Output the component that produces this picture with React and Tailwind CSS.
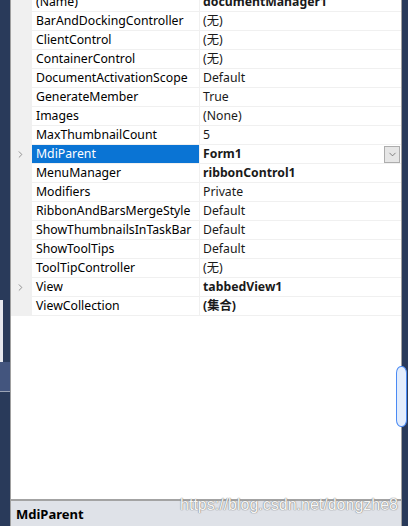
import { ChevronRight, ChevronDown } from "lucide-react";

const rows = [
  { name: "(Name)", value: "documentManager1", bold: true },
  { name: "BarAndDockingController", value: "(无)" },
  { name: "ClientControl", value: "(无)" },
  { name: "ContainerControl", value: "(无)" },
  { name: "DocumentActivationScope", value: "Default" },
  { name: "GenerateMember", value: "True" },
  { name: "Images", value: "(None)" },
  { name: "MaxThumbnailCount", value: "5" },
  { name: "MdiParent", value: "Form1", bold: true, expand: true, selected: true },
  { name: "MenuManager", value: "ribbonControl1", bold: true },
  { name: "Modifiers", value: "Private" },
  { name: "RibbonAndBarsMergeStyle", value: "Default" },
  { name: "ShowThumbnailsInTaskBar", value: "Default" },
  { name: "ShowToolTips", value: "Default" },
  { name: "ToolTipController", value: "(无)" },
  { name: "View", value: "tabbedView1", bold: true, expand: true },
  { name: "ViewCollection", value: "(集合)", bold: true },
];

function Row({ row }) {
  return (
    <div className="flex h-[19px] shrink-0">
      <div className="w-[21px] bg-[#f0f0f0] flex items-center justify-center">
        {row.expand && <ChevronRight size={11} strokeWidth={2} className="text-[#8a8a8a] ml-[-2px]" />}
      </div>
      <div
        className={`w-[168px] flex items-center pl-[4px] border-b border-r border-[#f0f0f0] ${
          row.selected ? "bg-[#0a74d4] text-white" : "text-black"
        }`}
      >
        {row.name}
      </div>
      <div
        className={`flex-1 flex items-center pl-[3px] border-b border-[#f0f0f0] text-[#1a1a1a] ${
          row.bold ? "font-bold" : ""
        }`}
      >
        <span className="flex-1">{row.value}</span>
        {row.selected && (
          <div className="w-[16px] h-[17px] mr-[1px] bg-[#e6e6e6] border border-[#adadad] flex items-center justify-center">
            <ChevronDown size={11} strokeWidth={1.5} className="text-[#555]" />
          </div>
        )}
      </div>
    </div>
  );
}

export default function App() {
  return (
    <div
      className="relative w-[408px] h-[526px] flex overflow-hidden bg-[#293a5a] text-[12.25px] leading-none"
      style={{ fontFamily: '"Noto Sans", "Noto Sans CJK SC", sans-serif' }}
    >
      <div className="w-[10px] flex flex-col">
        <div className="h-[300px]" />
        <div className="h-[62px] w-[3px] bg-[#e6e8ee]" />
        <div className="h-[30px] bg-[#43557e] border-b border-[#9aa3b5]" />
        <div className="flex-1" />
      </div>

      <div className="w-[392px] flex flex-col border-x border-[#a0a0a0] bg-white">
        <div className="flex-1 overflow-hidden">
          <div className="mt-[-7px] flex flex-col">
            {rows.map((r) => (
              <Row key={r.name} row={r} />
            ))}
          </div>
        </div>
        <div className="h-[27px] border-t-2 border-[#a3a3a3] bg-[#dfe2e8] pl-[5px] pt-[7px] font-bold text-[13px] text-black">
          MdiParent
        </div>
      </div>

      <div className="flex-1" />

      <div className="absolute left-[396px] top-[366px] w-[11px] h-[61px] bg-[#e3edfc] border border-[#4a8af4] rounded-[5px_5px_5px_5px/7px_7px_7px_7px]" />

      <div
        className="absolute right-[10px] top-[497px] text-[16px] text-[#f6f6f6] [text-shadow:0_0_1px_#7a7a7a,0_0_1px_#7a7a7a]"
        style={{ fontFamily: '"Liberation Sans", Arial, sans-serif' }}
      >
        https://blog.csdn.net/dongzhe8
      </div>
    </div>
  );
}
